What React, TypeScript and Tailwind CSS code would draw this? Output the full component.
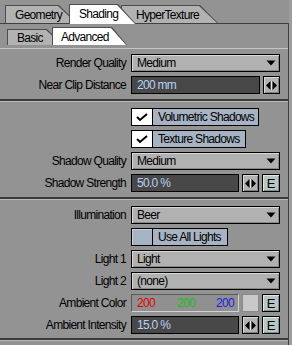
import React from 'react';

const Arrow = () => (
  <svg width="10" height="6" viewBox="0 0 10 6">
    <polygon points="0.5,0.5 9.5,0.5 5,5.5" fill="#000" />
  </svg>
);

const Nudge = () => (
  <svg width="11" height="9" viewBox="0 0 11 9">
    <polygon points="0,4.5 4.5,0 4.5,9" fill="#000" />
    <line x1="5.5" y1="0" x2="5.5" y2="9" stroke="#e8e8e8" strokeWidth="1" />
    <polygon points="6.5,0 11,4.5 6.5,9" fill="#000" />
  </svg>
);

const Check = () => (
  <svg width="12" height="9" viewBox="0 0 12 9">
    <path d="M1 4 L4 7 L11 1" fill="none" stroke="#000" strokeWidth="2" />
  </svg>
);

const Row = ({ label, children }: { label?: string; children: React.ReactNode }) => (
  <div className="flex items-center h-[18px]">
    <div className="w-[126px] text-right text-black leading-none">{label}</div>
    <div className="flex items-center ml-[5px]">{children}</div>
  </div>
);

const Dropdown = ({ value }: { value: string }) => (
  <div className="flex items-center justify-between w-[149px] h-[18px] border border-black bg-[#b1b1b1] shadow-[inset_1px_1px_0_#d8d8d8,inset_-1px_-1px_0_#888888] pl-[5px] pr-[3px]">
    <span className="leading-none">{value}</span>
    <Arrow />
  </div>
);

const NudgeBtn = () => (
  <div className="flex items-center justify-center w-[17px] h-[18px] border border-black bg-[#b3b3b3] shadow-[inset_1px_1px_0_#d8d8d8,inset_-1px_-1px_0_#808080]">
    <Nudge />
  </div>
);

const EBtn = () => (
  <div className="flex items-center justify-center w-[18px] h-[18px] border border-black bg-[#b6c6c4] shadow-[inset_1px_1px_0_#dde8e6,inset_-1px_-1px_0_#7f8d8b] text-[13px] tracking-normal leading-none">
    E
  </div>
);

const Separator = () => (
  <div className="h-[3px] border-t-2 border-t-[#3b3b3b] border-b border-b-[#b9b9b9]" />
);

const CheckItem = ({ label, checked, w }: { label: string; checked: boolean; w: string }) => (
  <div className="flex h-[18px]">
    <div
      className={
        checked
          ? 'flex items-center justify-center w-[22px] h-[18px] border border-black bg-white'
          : 'w-[22px] h-[18px] border border-black bg-[#a7b3c3] shadow-[inset_1px_1px_0_#c8d2de]'
      }
    >
      {checked && <Check />}
    </div>
    <div className={`${w} h-[18px] flex items-center border border-l-0 border-black bg-[#a7b3c3] pl-[5px] leading-none`}>
      {label}
    </div>
  </div>
);

export default function App() {
  return (
    <div className="w-[292px] h-[345px] overflow-hidden bg-[#9c9c9c] font-['Liberation_Sans',Arial,sans-serif] text-[12px] tracking-[-0.7px] text-black">
      {/* top tab strip */}
      <div className="flex items-end w-[289px] h-[24px] bg-[#939393] border-b border-[#3f3f3f] pl-[5px]">
        <div className="relative z-10 w-[72px] h-[18px] bg-[#4e4e4e] pt-[1px] pl-[1px] [clip-path:polygon(0_0,calc(100%_-_18px)_0,100%_100%,0_100%)]">
          <div className="flex items-center h-full bg-[#b2b2b2] pl-[9px] leading-none [clip-path:polygon(0_0,calc(100%_-_19px)_0,calc(100%_-_1px)_100%,0_100%)]">
            Geometry
          </div>
        </div>
        <div className="relative z-30 -ml-[8px] -mb-[1px] w-[67px] h-[20px] bg-[#4e4e4e] pt-[1px] pl-[1px] [clip-path:polygon(0_0,calc(100%_-_18px)_0,100%_100%,0_100%)]">
          <div className="flex items-center h-full bg-white pl-[9px] pb-[1px] leading-none [clip-path:polygon(0_0,calc(100%_-_19px)_0,calc(100%_-_1px)_100%,0_100%)]">
            Shading
          </div>
        </div>
        <div className="relative z-20 -ml-[15px] w-[97px] h-[18px] bg-[#4e4e4e] pt-[1px] pl-[1px] [clip-path:polygon(0_0,calc(100%_-_18px)_0,100%_100%,0_100%)]">
          <div className="flex items-center h-full bg-[#b2b2b2] pl-[14px] leading-none [clip-path:polygon(0_0,calc(100%_-_19px)_0,calc(100%_-_1px)_100%,0_100%)]">
            HyperTexture
          </div>
        </div>
      </div>

      <div className="w-[289px] bg-[#939393] border-r border-[#3f3f3f] h-[321px]">
        {/* sub tab strip */}
        <div className="flex items-end h-[25px] border-b border-[#c6c6c6] pl-[7px] pb-[3px]">
          <div className="relative z-10 w-[56px] h-[16px] bg-[#4e4e4e] pt-[1px] pl-[1px] [clip-path:polygon(0_0,calc(100%_-_16px)_0,100%_100%,0_100%)]">
            <div className="flex items-center h-full bg-[#b2b2b2] pl-[9px] leading-none [clip-path:polygon(0_0,calc(100%_-_17px)_0,calc(100%_-_1px)_100%,0_100%)]">
              Basic
            </div>
          </div>
          <div className="relative z-20 -ml-[11px] w-[75px] h-[18px] bg-[#4e4e4e] pt-[1px] pl-[1px] [clip-path:polygon(0_0,calc(100%_-_15px)_0,100%_100%,0_100%)]">
            <div className="flex items-center h-full bg-white pl-[8px] leading-none [clip-path:polygon(0_0,calc(100%_-_16px)_0,calc(100%_-_1px)_100%,0_100%)]">
              Advanced
            </div>
          </div>
        </div>

        {/* render section */}
        <div className="flex flex-col gap-[4px] pt-[5px] pb-[5px]">
          <Row label="Render Quality">
            <Dropdown value="Medium" />
          </Row>
          <Row label="Near Clip Distance">
            <div className="flex items-center w-[129px] h-[18px] border border-black bg-[#484848] text-[#b9d1f7] pl-[5px] leading-none">
              200 mm
            </div>
            <div className="ml-[3px]">
              <NudgeBtn />
            </div>
          </Row>
        </div>
        <Separator />

        {/* shadow section */}
        <div className="flex flex-col gap-[4px] pt-[6px] pb-[5px]">
          <Row>
            <CheckItem label="Volumetric Shadows" checked w="w-[106px]" />
          </Row>
          <Row>
            <CheckItem label="Texture Shadows" checked w="w-[93px]" />
          </Row>
          <Row label="Shadow Quality">
            <Dropdown value="Medium" />
          </Row>
          <Row label="Shadow Strength">
            <div className="flex items-center w-[108px] h-[18px] border border-black bg-[#484848] text-[#b9d1f7] pl-[5px] leading-none">
              50.0 %
            </div>
            <div className="flex gap-[3px] ml-[3px]">
              <NudgeBtn />
              <EBtn />
            </div>
          </Row>
        </div>
        <Separator />

        {/* illumination section */}
        <div className="flex flex-col gap-[4px] pt-[6px] pb-[4px]">
          <Row label="Illumination">
            <Dropdown value="Beer" />
          </Row>
          <Row>
            <CheckItem label="Use All Lights" checked={false} w="w-[75px]" />
          </Row>
          <Row label="Light 1">
            <Dropdown value="Light" />
          </Row>
          <Row label="Light 2">
            <Dropdown value="(none)" />
          </Row>
          <Row label="Ambient Color">
            <div className="flex items-center w-[108px] h-[18px] border border-t-[#5a5a5a] border-l-[#5a5a5a] border-b-[#d2d2d2] border-r-[#d2d2d2] bg-[#909090] pl-[5px] leading-none">
              <span className="w-[40px] text-[#e00000]">200</span>
              <span className="w-[39px] text-[#10c010]">200</span>
              <span className="text-[#2020e0]">200</span>
            </div>
            <div className="flex gap-[3px] ml-[3px]">
              <div className="w-[17px] h-[18px] border border-[#8a8a8a] bg-[#c9c9c9]" />
              <EBtn />
            </div>
          </Row>
          <Row label="Ambient Intensity">
            <div className="flex items-center w-[108px] h-[18px] border border-black bg-[#484848] text-[#b9d1f7] pl-[5px] leading-none">
              15.0 %
            </div>
            <div className="flex gap-[3px] ml-[3px]">
              <NudgeBtn />
              <EBtn />
            </div>
          </Row>
        </div>
        <Separator />
      </div>
    </div>
  );
}
